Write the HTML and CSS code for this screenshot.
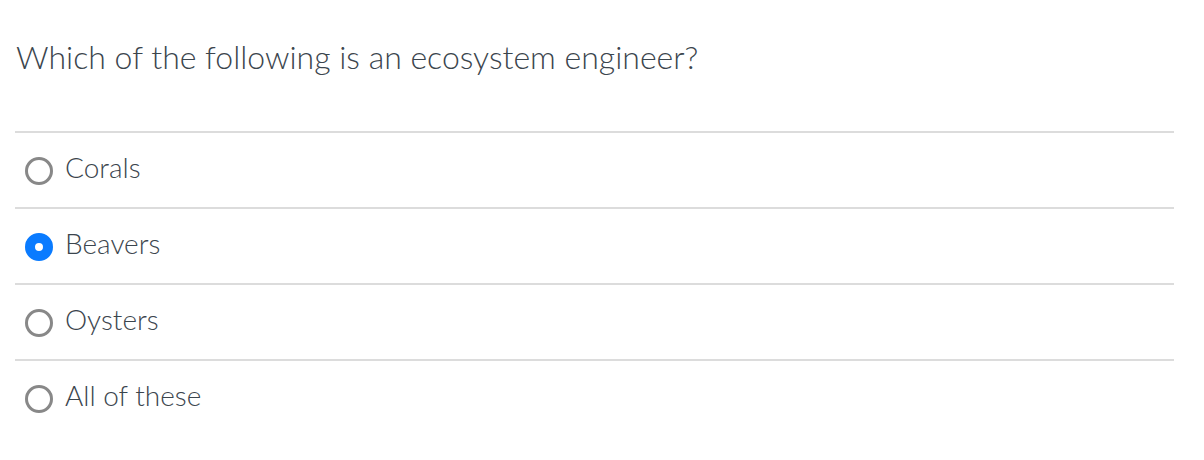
FILE: index.html
```html
<!DOCTYPE html>
<html>
<head>
<meta charset="utf-8">
<link rel="stylesheet" href="styles.css">
</head>
<body>
<div class="quiz">
  <div class="question">Which of the following is an ecosystem engineer?</div>
  <div class="answers">
    <label class="answer"><span class="radio"></span><span class="label">Corals</span></label>
    <label class="answer"><span class="radio checked"></span><span class="label">Beavers</span></label>
    <label class="answer"><span class="radio"></span><span class="label">Oysters</span></label>
    <label class="answer"><span class="radio"></span><span class="label">All of these</span></label>
  </div>
</div>
</body>
</html>
```
FILE: styles.css
```css
html, body {
  margin: 0;
  padding: 0;
  background: #fff;
}
body {
  font-family: "Lato Light", Lato, "Noto Sans", sans-serif;
  font-weight: 300;
  color: #3b454d;
}
.quiz {
  padding: 0 30px 0 15px;
}
.question {
  font-size: 32px;
  line-height: 40px;
  padding: 37px 0 54px 1px;
}
.answers {
  display: flex;
  flex-direction: column;
}
.answer {
  display: flex;
  align-items: center;
  height: 76px;
  border-top: 2px solid #dcdcdc;
  box-sizing: border-box;
  gap: 12px;
  padding-left: 10px;
}
.radio {
  width: 28px;
  height: 28px;
  border: 3px solid #888;
  border-radius: 50%;
  box-sizing: border-box;
  flex: none;
  margin-top: 2px;
}
.radio.checked {
  border: 10px solid #0a7bff;
  background: #fff;
}
.label {
  font-size: 28px;
  line-height: 34px;
  padding-bottom: 6px;
}
```
